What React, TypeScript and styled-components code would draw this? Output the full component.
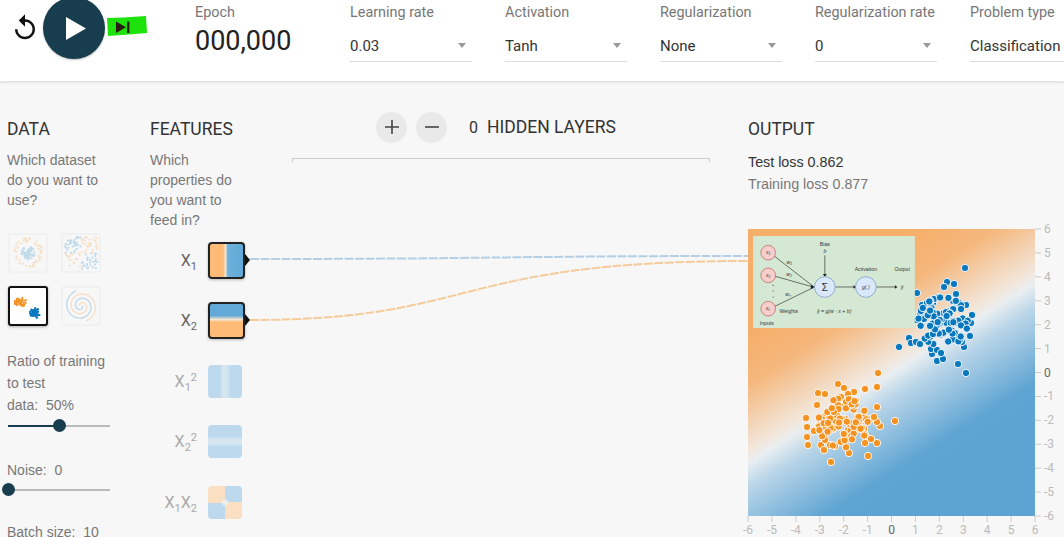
import React from 'react';
import styled, { createGlobalStyle } from 'styled-components';
import { MdReplay } from 'react-icons/md';

const GlobalStyle = createGlobalStyle`
	html, body {
		margin: 0;
		height: 537px;
		overflow: hidden;
		background: #f7f7f7;
		font-family: "Liberation Sans", Arial, sans-serif;
		color: #777;
	}
`;

const Page = styled.div`
	width: 1064px;
	height: 537px;
	overflow: hidden;
`;

const Header = styled.header`
	height: 81px;
	background: white;
	box-shadow: 0 1px 3px rgba(0, 0, 0, 0.14);
	display: flex;
	overflow: hidden;
	position: relative;
	z-index: 2;
`;

const Controls = styled.div`
	width: 195px;
	flex-shrink: 0;
	display: flex;
	align-items: flex-start;
	padding-left: 10px;
	box-sizing: border-box;
`;

const ResetButton = styled.div`
	width: 33px;
	margin-top: 13px;
	color: #111;
	font-size: 30px;
	line-height: 30px;
`;

const PlayButton = styled.div`
	width: 62px;
	height: 62px;
	margin-top: -3px;
	border-radius: 50%;
	background: #183d4e;
	box-shadow: 0 1px 2px rgba(0, 0, 0, 0.25);
	display: flex;
	align-items: center;
	justify-content: center;
	flex-shrink: 0;
	padding-left: 3px;
	box-sizing: border-box;
`;

const StepMark = styled.svg`
	margin: 15px 0 0 2px;
	flex-shrink: 0;
`;

const EpochBlock = styled.div`
	width: 155px;
	flex-shrink: 0;
`;

const FieldLabel = styled.div`
	font-family: Roboto, sans-serif;
	font-size: 14.4px;
	line-height: 16px;
	color: #777;
	margin-top: 5px;
	white-space: nowrap;
`;

const EpochValue = styled.div`
	font-family: Roboto, sans-serif;
	font-size: 27px;
	line-height: 32px;
	color: #222;
	margin-top: 4px;
`;

const DropdownBlock = styled.div`
	width: 155px;
	flex-shrink: 0;
`;

const Dropdown = styled.div`
	width: 122px;
	height: 31px;
	margin-top: 9px;
	border-bottom: 1px solid #ddd;
	box-sizing: content-box;
	display: flex;
	align-items: center;
	justify-content: space-between;
	font-family: Roboto, sans-serif;
	font-size: 15px;
	color: #333;
	white-space: nowrap;
`;

const Caret = styled.span`
	width: 0;
	height: 0;
	margin-right: 6px;
	border-left: 4.5px solid transparent;
	border-right: 4.5px solid transparent;
	border-top: 5px solid #999;
`;

const Main = styled.main`
	position: relative;
	display: flex;
	padding: 38px 0 0 7px;
	height: 418px;
`;

const Heading = styled.h4`
	margin: 0;
	font-family: Roboto, sans-serif;
	font-weight: 400;
	font-size: 17.5px;
	line-height: 20px;
	color: #333;
	white-space: nowrap;
`;

const DataColumn = styled.section`
	width: 143px;
	flex-shrink: 0;
`;

const Prose = styled.p`
	margin: 11px 0 0;
	font-size: 14px;
	line-height: 20px;
	color: #777;
`;

const DatasetGrid = styled.div`
	display: grid;
	grid-template-columns: 40px 40px;
	gap: 13px;
	margin: 23px 0 0 1px;
`;

const DatasetThumb = styled.div<{ $selected?: boolean }>`
	width: 40px;
	height: 40px;
	box-sizing: border-box;
	border-radius: 3px;
	background: ${p => (p.$selected ? 'white' : 'transparent')};
	border: ${p => (p.$selected ? '2px solid #111' : '2px solid #f1f1f1')};
	box-shadow: ${p => (p.$selected ? '0 1px 3px rgba(0,0,0,0.3)' : 'none')};
	svg {
		display: block;
		width: 100%;
		height: 100%;
		opacity: ${p => (p.$selected ? 1 : 0.22)};
	}
`;

const SliderLabel = styled.div<{ $top: number }>`
	margin-top: ${p => p.$top}px;
	font-size: 14px;
	line-height: 22px;
	width: 110px;
	color: #777;
	white-space: pre-wrap;
`;

const Slider = styled.div<{ $gap: number }>`
	position: relative;
	width: 102px;
	height: 2px;
	margin: ${p => p.$gap}px 0 0 1px;
	background: #bbb;
`;

const SliderFill = styled.div`
	height: 100%;
	background: #183d4e;
`;

const SliderThumb = styled.div`
	position: absolute;
	top: -6px;
	width: 13px;
	height: 13px;
	margin-left: -6.5px;
	border-radius: 50%;
	background: #183d4e;
`;

const FeatureColumn = styled.section`
	width: 142px;
	flex-shrink: 0;
`;

const FeatureProse = styled(Prose)`
	width: 90px;
`;

const FeatureList = styled.div`
	display: flex;
	flex-direction: column;
`;

const FeatureRow = styled.div`
	height: 60.5px;
	display: flex;
	align-items: center;
`;

const FeatureLabel = styled.div<{ $active?: boolean }>`
	width: 47px;
	margin-right: 11px;
	text-align: right;
	font-family: Roboto, sans-serif;
	font-size: 16px;
	color: ${p => (p.$active ? '#666' : '#aaa')};
	white-space: nowrap;
	sub, sup {
		font-size: 11px;
		line-height: 0;
	}
`;

const FeatureBox = styled.div<{ $active?: boolean; $fill: string }>`
	position: relative;
	width: ${p => (p.$active ? '37px' : '34px')};
	height: ${p => (p.$active ? '37px' : '33px')};
	box-sizing: border-box;
	border-radius: 4px;
	border: ${p => (p.$active ? '2px solid #222' : 'none')};
	box-shadow: ${p => (p.$active ? '0 1px 3px rgba(0,0,0,0.25)' : 'none')};
	background: ${p => p.$fill};
	&::after {
		content: '';
		display: ${p => (p.$active ? 'block' : 'none')};
		position: absolute;
		right: -7px;
		top: 10px;
		border-top: 6px solid transparent;
		border-bottom: 6px solid transparent;
		border-left: 5px solid #111;
	}
`;

const NetworkColumn = styled.section`
	width: 456px;
	flex-shrink: 0;
`;

const LayerControls = styled.div`
	display: flex;
	align-items: center;
	height: 30px;
	margin: -7px 0 0 84px;
`;

const RoundButton = styled.div`
	width: 31px;
	height: 31px;
	margin-right: 9px;
	border-radius: 50%;
	background: #e9e9e9;
	color: #444;
	display: flex;
	align-items: center;
	justify-content: center;
`;

const LayerCount = styled.span`
	margin-left: 13px;
	width: 18px;
	font-family: Roboto, sans-serif;
	font-size: 16px;
	color: #333;
`;

const LayerTitle = styled(Heading)`
	display: inline;
`;

const Bracket = styled.div`
	width: 418px;
	height: 4px;
	margin-top: 16px;
	box-sizing: border-box;
	border: 1px solid #ccc;
	border-bottom: none;
`;

const OutputColumn = styled.section`
	width: 316px;
	flex-shrink: 0;
`;

const LossLine = styled.div<{ $strong?: boolean }>`
	font-size: 14.3px;
	line-height: 22px;
	color: ${p => (p.$strong ? '#333' : '#777')};
	&:first-of-type {
		margin-top: 12px;
	}
`;

const PlotSvg = styled.svg`
	display: block;
	margin-top: 34px;
	overflow: visible;
`;

const LinkLayer = styled.svg`
	position: absolute;
	left: 0;
	top: 0;
	pointer-events: none;
`;

// seeded so the scatter stays the same between renders
const makeRandom = (seed: number) => {
	let s = seed;
	return () => {
		s = (s * 16807) % 2147483647;
		return (s - 1) / 2147483646;
	};
};

const gaussian = (seed: number, n: number, cx: number, cy: number, sd: number) => {
	const rnd = makeRandom(seed);
	const pts: number[][] = [];
	for (let i = 0; i < n; i++) {
		const r = Math.sqrt(-2 * Math.log(rnd() + 0.0001));
		const a = 2 * Math.PI * rnd();
		pts.push([cx + Math.min(r, 1.9) * sd * Math.cos(a), cy + Math.min(r, 1.9) * sd * Math.sin(a)]);
	}
	return pts;
};

const bluePoints = [
	[965, 268], [947, 282], [954, 284], [944, 287], [956, 294], [939, 297], [917, 293], [953, 301], [966, 305],
	[899, 347], [909, 338], [911, 343], [916, 342], [920, 344], [958, 364], [966, 373], [937, 361], [943, 359],
	[932, 354], [931, 349], [937, 350], [941, 353], [964, 347], [970, 336], [972, 315], [971, 323], [958, 339],
	[962, 342], [922, 305], [927, 303], [933, 303], [920, 313], [924, 319], [916, 320],
	...gaussian(77, 80, 943, 322, 13),
];

const orangePoints = [
	[878, 373], [877, 387], [838, 384], [844, 388], [865, 389], [854, 392], [848, 394], [818, 393], [825, 394],
	[841, 397], [837, 401], [846, 402], [856, 401], [817, 405], [877, 407], [806, 418], [807, 427], [807, 437],
	[808, 445], [814, 431], [821, 445], [824, 450], [831, 462], [849, 453], [868, 456], [877, 443], [871, 439],
	[865, 443], [895, 421], [880, 426], [877, 422], [870, 419], [874, 417], [864, 429], [830, 445], [835, 446],
	...gaussian(1234, 80, 843, 423, 13),
];

const yTicks = [6, 5, 4, 3, 2, 1, 0, -1, -2, -3, -4, -5, -6];
const xTicks = [-6, -5, -4, -3, -2, -1, 0, 1, 2, 3, 4, 5, 6];

const Dots: React.FC<{ pts: number[][]; fill: string }> = ({ pts, fill }) => (
	<g fill={fill} stroke="#fff" strokeWidth={1} strokeOpacity={0.9}>
		{pts.map(([x, y], i) => (
			<circle key={i} cx={x} cy={y} r={3.7} />
		))}
	</g>
);

// neuron diagram pasted over the plot in the screenshot
const NeuronDiagram: React.FC = () => (
	<svg x={753} y={236} width={162} height={92} viewBox="25 32 485 276" fontFamily="Liberation Sans, sans-serif">
		<rect x={25} y={32} width={485} height={276} fill="#d5e8d4" />
		<g stroke="#333" strokeWidth={2} fill="none">
			<path d="M88 92L205 183M88 152L205 185M88 244L205 187M240 90V150M272 185H328M395 185H452" />
		</g>
		<path d="M234 146H246L240 154ZM326 180V190L334 185ZM450 180V190L458 185ZM198 178L210 185L198 192Z" fill="#222" />
		<g fill="#f8cecc" stroke="#b85450" strokeWidth={2}>
			<circle cx={70} cy={82} r={22} />
			<circle cx={70} cy={150} r={22} />
			<circle cx={70} cy={250} r={22} />
		</g>
		<g fill="#dae8fc" stroke="#6c8ebf" strokeWidth={2}>
			<circle cx={240} cy={185} r={31} />
			<circle cx={363} cy={185} r={31} />
		</g>
		<g fill="#444">
			<circle cx={85} cy={180} r={1.8} />
			<circle cx={85} cy={197} r={1.8} />
			<circle cx={85} cy={215} r={1.8} />
		</g>
		<g fill="#333" fontSize={15.5} textAnchor="middle">
			<text x={70} y={87} fontStyle="italic">x₁</text>
			<text x={70} y={155} fontStyle="italic">x₂</text>
			<text x={70} y={255} fontStyle="italic">xₙ</text>
			<text x={133} y={116} fontStyle="italic">w₁</text>
			<text x={133} y={152} fontStyle="italic">w₂</text>
			<text x={130} y={212} fontStyle="italic">wₙ</text>
			<text x={132} y={262}>Weights</text>
			<text x={66} y={300}>Inputs</text>
			<text x={240} y={62}>Bias</text>
			<text x={240} y={84} fontStyle="italic">b</text>
			<text x={363} y={138}>Activation</text>
			<text x={472} y={138}>Output</text>
			<text x={472} y={190} fontStyle="italic">ŷ</text>
			<text x={363} y={190} fontStyle="italic">g(.)</text>
			<text x={268} y={263} fontStyle="italic">ŷ = g(w · x + b)</text>
			<text x={240} y={196} fontSize={32}>Σ</text>
		</g>
	</svg>
);

const Plot: React.FC = () => (
	<PlotSvg width={316} height={308} viewBox="748 229 316 308">
		<defs>
			<linearGradient id="heat" gradientUnits="userSpaceOnUse" x1={835} y1={280} x2={947} y2={458}>
				<stop offset="0" stopColor="#f5af6a" />
				<stop offset="0.2" stopColor="#f5b77c" />
				<stop offset="0.47" stopColor="#f2e7dc" />
				<stop offset="0.52" stopColor="#e9eef1" />
				<stop offset="0.62" stopColor="#b9d5e8" />
				<stop offset="0.92" stopColor="#5fa5d3" />
				<stop offset="1" stopColor="#5da4d2" />
			</linearGradient>
		</defs>
		<rect x={748} y={229} width={287} height={287} fill="url(#heat)" />
		<Dots pts={bluePoints} fill="#0877bd" />
		<Dots pts={orangePoints} fill="#f59322" />
		<NeuronDiagram />
		<g fontFamily="Roboto, sans-serif" fontSize={12}>
			{yTicks.map(t => {
				const y = 229 + (6 - t) * 23.92;
				return (
					<g key={t}>
						<line x1={1035} x2={1041} y1={y} y2={y} stroke="#ccc" />
						<text x={1044} y={y + 4} fill={t === 0 ? '#666' : '#bbb'}>{t}</text>
					</g>
				);
			})}
			{xTicks.map(t => {
				const x = 748 + (t + 6) * 23.92;
				return (
					<g key={t}>
						<line x1={x} x2={x} y1={516} y2={522} stroke="#ccc" />
						<text x={x} y={534} textAnchor="middle" fill={t === 0 ? '#666' : '#bbb'}>{t}</text>
					</g>
				);
			})}
		</g>
	</PlotSvg>
);

const gaussThumb = gaussian(5, 50, 11, 14, 2.2).map(([x, y]) => [x + (x - 11) * 0.5, y]);
const gaussThumb2 = gaussian(9, 50, 25, 25, 2.6);
const circleInner = gaussian(31, 60, 18, 18, 3.4);
const circleOuter = (() => {
	const rnd = makeRandom(41);
	return Array.from({ length: 50 }, () => {
		const a = rnd() * Math.PI * 2;
		const r = 11 + rnd() * 4;
		return [18 + r * Math.cos(a), 18 + r * Math.sin(a)];
	});
})();
const xorPts = (() => {
	const rnd = makeRandom(63);
	return Array.from({ length: 110 }, () => {
		const x = 2 + rnd() * 32;
		const y = 2 + rnd() * 32;
		return [x, y, (x - 18) * (y - 18) > 0 ? 1 : 0];
	});
})();

const spiral = (phase: number) => {
	let d = '';
	for (let i = 0; i <= 60; i++) {
		const t = (i / 60) * Math.PI * 3.4;
		const r = 1 + (i / 60) * 15;
		d += `${i ? 'L' : 'M'}${(18 + r * Math.cos(t + phase)).toFixed(1)} ${(18 + r * Math.sin(t + phase)).toFixed(1)}`;
	}
	return d;
};

const PointCloud: React.FC<{ pts: number[][]; fill: string; r?: number }> = ({ pts, fill, r = 1.1 }) => (
	<g fill={fill}>
		{pts.map(([x, y], i) => (
			<circle key={i} cx={x} cy={y} r={r} />
		))}
	</g>
);

const features = [
	{
		key: 'x1',
		active: true,
		label: <>X<sub>1</sub></>,
		fill: 'linear-gradient(90deg, #fdbb77 0 40%, #f4e4d0 47%, #6db0da 54%, #62a9d7 100%)',
	},
	{
		key: 'x2',
		active: true,
		label: <>X<sub>2</sub></>,
		fill: 'linear-gradient(180deg, #62a9d7 0 35%, #f4e4d0 47%, #fdbb77 55%, #fdbb77 100%)',
	},
	{
		key: 'x1sq',
		label: <>X<sub>1</sub><sup>2</sup></>,
		fill: 'linear-gradient(90deg, #bcd9ee 0 34%, #d6e6f0 44% 56%, #bcd9ee 66% 100%)',
	},
	{
		key: 'x2sq',
		label: <>X<sub>2</sub><sup>2</sup></>,
		fill: 'linear-gradient(180deg, #bcd9ee 0 34%, #d6e6f0 44% 56%, #bcd9ee 66% 100%)',
	},
	{
		key: 'x1x2',
		label: <>X<sub>1</sub>X<sub>2</sub></>,
		fill: 'radial-gradient(circle at 50% 50%, #eeeeea 0 8%, transparent 18%), conic-gradient(#bcd9ee 0 90deg, #fbdfc3 90deg 180deg, #bcd9ee 180deg 270deg, #fbdfc3 270deg)',
	},
];

const fieldList = [
	{ label: 'Learning rate', value: '0.03', caret: true },
	{ label: 'Activation', value: 'Tanh', caret: true },
	{ label: 'Regularization', value: 'None', caret: true },
	{ label: 'Regularization rate', value: '0', caret: true },
	{ label: 'Problem type', value: 'Classification', caret: false },
];

const App: React.FC = () => (
	<Page>
		<GlobalStyle />
		<Header>
			<Controls>
				<ResetButton>
					<MdReplay />
				</ResetButton>
				<PlayButton>
					<svg width={20} height={23} viewBox="0 0 20 23">
						<polygon points="0,0 20,11.5 0,23" fill="white" />
					</svg>
				</PlayButton>
				<StepMark width={40} height={22} viewBox="0 0 40 22">
					<path d="M0 3L16 2.5L39 1L40 18L22 19.5L1 21Z" fill="#1ee20c" />
					<path d="M9 6.5L19 12.25L9 18Z" fill="#2a1c10" />
					<rect x={20} y={6.5} width={2.4} height={11.5} fill="#2a1c10" />
				</StepMark>
			</Controls>
			<EpochBlock>
				<FieldLabel>Epoch</FieldLabel>
				<EpochValue>000,000</EpochValue>
			</EpochBlock>
			{fieldList.map(f => (
				<DropdownBlock key={f.label}>
					<FieldLabel>{f.label}</FieldLabel>
					<Dropdown>
						{f.value}
						{f.caret && <Caret />}
					</Dropdown>
				</DropdownBlock>
			))}
		</Header>
		<Main>
			<DataColumn>
				<Heading>DATA</Heading>
				<Prose>
					Which dataset
					<br />
					do you want to
					<br />
					use?
				</Prose>
				<DatasetGrid>
					<DatasetThumb>
						<svg viewBox="0 0 36 36">
							<PointCloud pts={circleOuter} fill="#f59322" />
							<PointCloud pts={circleInner} fill="#0877bd" />
						</svg>
					</DatasetThumb>
					<DatasetThumb>
						<svg viewBox="0 0 36 36">
							<PointCloud pts={xorPts.filter(p => p[2])} fill="#0877bd" />
							<PointCloud pts={xorPts.filter(p => !p[2])} fill="#f59322" />
						</svg>
					</DatasetThumb>
					<DatasetThumb $selected>
						<svg viewBox="0 0 36 36">
							<PointCloud pts={gaussThumb} fill="#f59322" />
							<PointCloud pts={gaussThumb2} fill="#0877bd" />
						</svg>
					</DatasetThumb>
					<DatasetThumb>
						<svg viewBox="0 0 36 36" fill="none" strokeWidth={1.4}>
							<path d={spiral(0)} stroke="#0877bd" />
							<path d={spiral(Math.PI)} stroke="#f59322" />
						</svg>
					</DatasetThumb>
				</DatasetGrid>
				<SliderLabel $top={24}>{'Ratio of training\nto test\ndata:  50%'}</SliderLabel>
				<Slider $gap={9}>
					<SliderFill style={{ width: '50%' }} />
					<SliderThumb style={{ left: '50%' }} />
				</Slider>
				<SliderLabel $top={32}>{'Noise:  0'}</SliderLabel>
				<Slider $gap={8}>
					<SliderFill style={{ width: '0%' }} />
					<SliderThumb style={{ left: '0%' }} />
				</Slider>
				<SliderLabel $top={30}>{'Batch size:  10'}</SliderLabel>
			</DataColumn>
			<FeatureColumn>
				<Heading>FEATURES</Heading>
				<FeatureProse>Which properties do you want to feed in?</FeatureProse>
				<FeatureList>
					{features.map(f => (
						<FeatureRow key={f.key}>
							<FeatureLabel $active={f.active}>{f.label}</FeatureLabel>
							<FeatureBox $active={f.active} $fill={f.fill} />
						</FeatureRow>
					))}
				</FeatureList>
			</FeatureColumn>
			<NetworkColumn>
				<LayerControls>
					<RoundButton>
						<svg width={14} height={14} viewBox="0 0 14 14">
							<path d="M0 7H14M7 0V14" stroke="#444" strokeWidth={1.6} />
						</svg>
					</RoundButton>
					<RoundButton>
						<svg width={14} height={14} viewBox="0 0 14 14">
							<path d="M0 7H14" stroke="#444" strokeWidth={1.6} />
						</svg>
					</RoundButton>
					<LayerCount>0</LayerCount>
					<LayerTitle>HIDDEN LAYERS</LayerTitle>
				</LayerControls>
				<Bracket />
			</NetworkColumn>
			<OutputColumn>
				<Heading>OUTPUT</Heading>
				<LossLine $strong>Test loss 0.862</LossLine>
				<LossLine>Training loss 0.877</LossLine>
				<Plot />
			</OutputColumn>
			<LinkLayer width={1064} height={456} viewBox="0 81 1064 456" fill="none" strokeWidth={2} strokeDasharray="9 1.5">
				<path d="M250 259 C 500 259 500 256 748 256" stroke="#b3cfe6" />
				<path d="M250 320 C 480 320 450 261 748 261" stroke="#f5cb9c" />
			</LinkLayer>
		</Main>
	</Page>
);

export default App;
